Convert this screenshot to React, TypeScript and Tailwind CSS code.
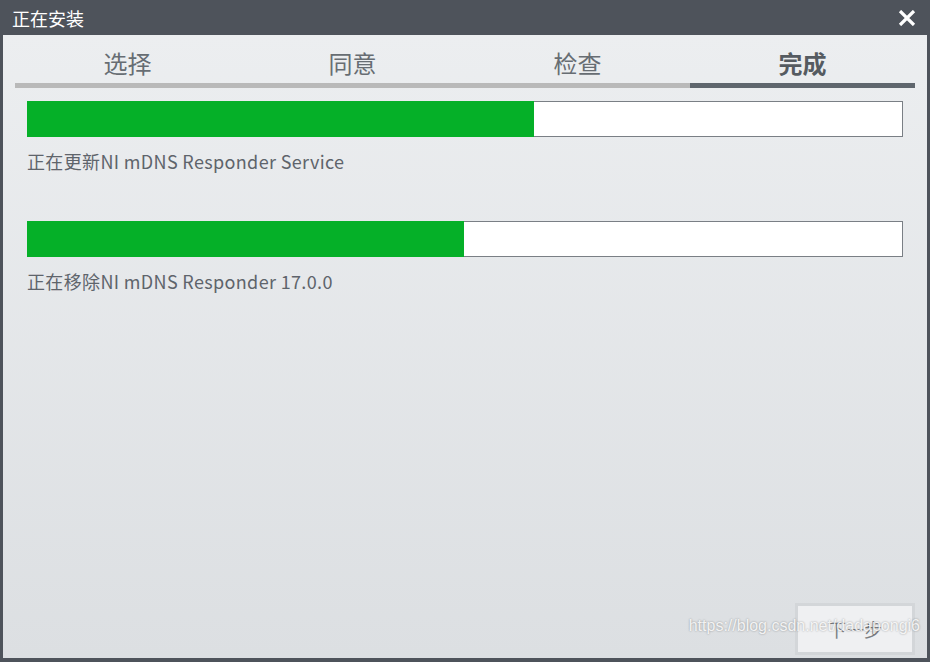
const steps = ['选择', '同意', '检查', '完成'];

const tasks = [
  { label: '正在更新NI mDNS Responder Service', pct: 58 },
  { label: '正在移除NI mDNS Responder 17.0.0', pct: 50 },
];

const cjk = { fontFamily: '"Noto Sans CJK SC", "Noto Sans", sans-serif' };

export default function App() {
  return (
    <div
      className="relative flex h-[662px] w-[930px] flex-col bg-[#4e535b] px-[3px] pb-[4px]"
      style={cjk}
    >
      {/* title bar */}
      <div className="flex h-[35px] shrink-0 items-center justify-between pl-[9px] pr-[11px]">
        <span className="text-[18px] leading-none text-white">正在安装</span>
        <svg width="18" height="16" viewBox="0 0 18 16" aria-hidden="true">
          <path d="M2 1 L16 15 M16 1 L2 15" stroke="#ffffff" strokeWidth="3.2" />
        </svg>
      </div>

      <div className="flex flex-1 flex-col bg-gradient-to-b from-[#eceef0] to-[#dcdfe2]">
        {/* step tabs */}
        <div className="ml-[12px] grid w-[900px] grid-cols-4">
          {steps.map((s, i) => (
            <div key={s} className="flex flex-col">
              <div
                className={
                  'flex h-[48px] items-center justify-center pt-[8px] text-[24px] ' +
                  (i === 3 ? 'font-bold text-[#555b61]' : 'text-[#676d73]')
                }
              >
                {s}
              </div>
              <div className={i === 3 ? 'h-[5px] bg-[#5f666d]' : 'h-[5px] bg-[#b9b9b9]'} />
            </div>
          ))}
        </div>

        {/* progress */}
        <div className="mt-[13px] flex flex-col pl-[24px]">
          {tasks.map((t, i) => (
            <div key={t.label} className={i > 0 ? 'mt-[48px]' : ''}>
              <div className="relative h-[36px] w-[876px] border border-[#7a7f85] bg-white">
                <div
                  className="absolute -bottom-px -left-px -top-px bg-[#05b028]"
                  style={{ width: `${t.pct}%` }}
                />
              </div>
              <p className="mt-[12px] text-[18px] leading-[24px] tracking-[0.35px] text-[#5e646b]">
                {t.label}
              </p>
            </div>
          ))}
        </div>

        <div className="flex-1" />

        <div className="flex justify-end pb-[3px] pr-[12px]">
          <button className="flex h-[52px] w-[120px] items-center justify-center border-[3px] border-[#d3d6d9] bg-[#eff0f2] text-[18px] text-[#7b7e82]">
            下一步
          </button>
        </div>
      </div>

      {/* watermark */}
      <span
        className="absolute bottom-[24px] right-[10px] text-[16px] text-white/85 [text-shadow:0_0_2px_rgba(0,0,0,0.4)]"
        style={{ fontFamily: '"Liberation Sans", Arial, sans-serif' }}
      >
        https://blog.csdn.net/dadapongi6
      </span>
    </div>
  );
}
